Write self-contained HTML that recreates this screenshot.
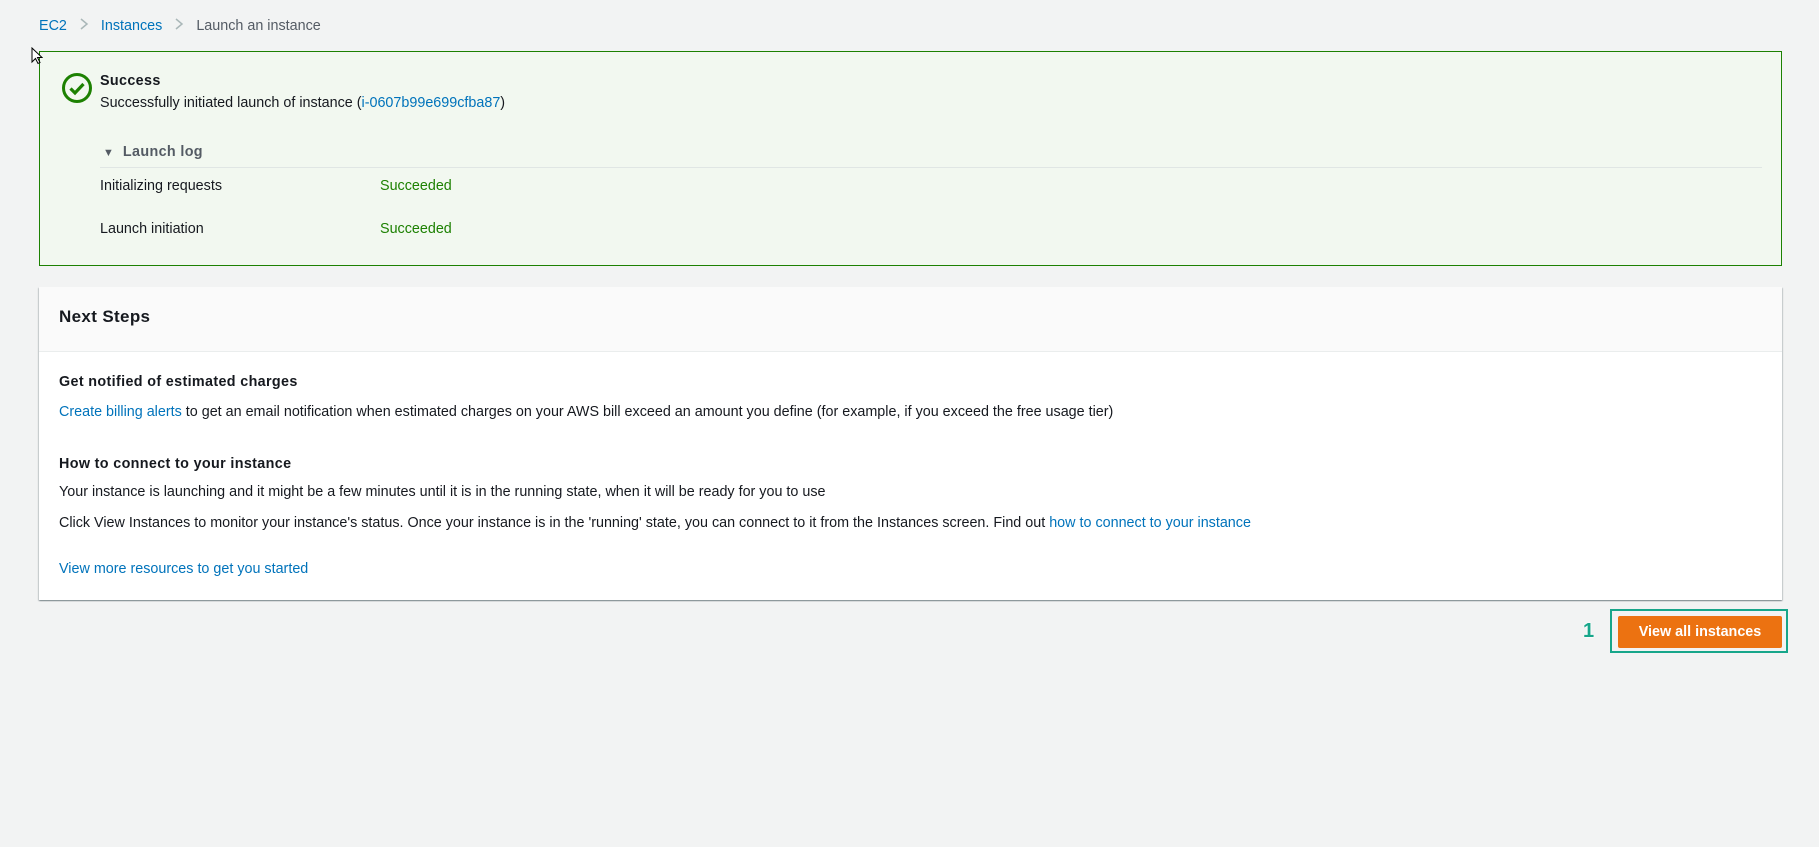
<!DOCTYPE html>
<html><head><style>
body{margin:0;width:1819px;height:847px;background:#f2f3f3;font-family:"Liberation Sans",Arial,sans-serif;font-size:14.35px;color:#16191f;position:relative;overflow:hidden}
.a{position:absolute;white-space:nowrap;line-height:18px}
.l{color:#0073bb}
.b{font-weight:bold;letter-spacing:0.35px}
.g{color:#1d8102}
</style></head><body>
<div class="a" style="left:39px;top:17px"><span class="l">EC2</span><svg width="34" height="14" style="vertical-align:-1px"><path d="M14 2l6 5-6 5" fill="none" stroke="#aab7b8" stroke-width="1.5"/></svg><span class="l">Instances</span><svg width="34" height="14" style="vertical-align:-1px"><path d="M14 2l6 5-6 5" fill="none" stroke="#aab7b8" stroke-width="1.5"/></svg><span style="color:#545b64">Launch an instance</span></div>
<div style="position:absolute;left:39px;top:51px;width:1741px;height:213px;border:1px solid #1d8102;background:#f2f8f0"></div>
<svg style="position:absolute;left:61px;top:72px" width="32" height="32"><circle cx="16" cy="16" r="13.5" fill="none" stroke="#1d8102" stroke-width="3"/><path d="M9.5 16.5l4.5 4.5 8.5-9" fill="none" stroke="#1d8102" stroke-width="3.2"/></svg>
<div class="a b" style="left:100px;top:72px">Success</div>
<div class="a" style="left:100px;top:94px">Successfully initiated launch of instance (<span class="l">i-0607b99e699cfba87</span>)</div>
<div class="a b" style="left:103px;top:143px;color:#545b64"><span style="font-size:11px">&#9660;</span>&nbsp;&nbsp;Launch log</div>
<div style="position:absolute;left:100px;top:167px;width:1662px;height:1px;background:#e0e6e4"></div>
<div class="a" style="left:100px;top:177px">Initializing requests</div>
<div class="a g" style="left:380px;top:177px">Succeeded</div>
<div class="a" style="left:100px;top:220px">Launch initiation</div>
<div class="a g" style="left:380px;top:220px">Succeeded</div>
<div style="position:absolute;left:39px;top:287px;width:1743px;height:313px;background:#fff;box-shadow:0 1px 1px 0 rgba(0,28,36,.3),1px 1px 1px 0 rgba(0,28,36,.15),-1px 1px 1px 0 rgba(0,28,36,.15)"></div>
<div style="position:absolute;left:39px;top:287px;width:1743px;height:64px;background:#fafafa;border-bottom:1px solid #eaeded"></div>
<div class="a b" style="left:59px;top:307px;font-size:17px;line-height:20px">Next Steps</div>
<div class="a b" style="left:59px;top:373px">Get notified of estimated charges</div>
<div class="a" style="left:59px;top:403px"><span class="l">Create billing alerts</span> to get an email notification when estimated charges on your AWS bill exceed an amount you define (for example, if you exceed the free usage tier)</div>
<div class="a b" style="left:59px;top:455px">How to connect to your instance</div>
<div class="a" style="left:59px;top:483px">Your instance is launching and it might be a few minutes until it is in the running state, when it will be ready for you to use</div>
<div class="a" style="left:59px;top:514px">Click View Instances to monitor your instance's status. Once your instance is in the 'running' state, you can connect to it from the Instances screen. Find out <span class="l">how to connect to your instance</span></div>
<div class="a l" style="left:59px;top:560px">View more resources to get you started</div>
<div style="position:absolute;left:1610px;top:609px;width:174px;height:40px;border:2px solid #17a68a"></div>
<div class="a b" style="left:1618px;top:616px;width:164px;height:32px;line-height:32px;background:#ec7211;color:#fff;text-align:center;border-radius:2px;letter-spacing:0">View all instances</div>
<div class="a b" style="left:1583px;top:620px;font-size:20px;line-height:22px;color:#17a68a;text-shadow:0 0 2px #fff,0 0 2px #fff">1</div>
<svg style="position:absolute;left:31px;top:47px" width="12" height="18"><path d="M1 1v14l3.5-3.5 2.5 5 2-1-2.5-5H11z" fill="#fff" stroke="#000" stroke-width="1"/></svg>
</body></html>
